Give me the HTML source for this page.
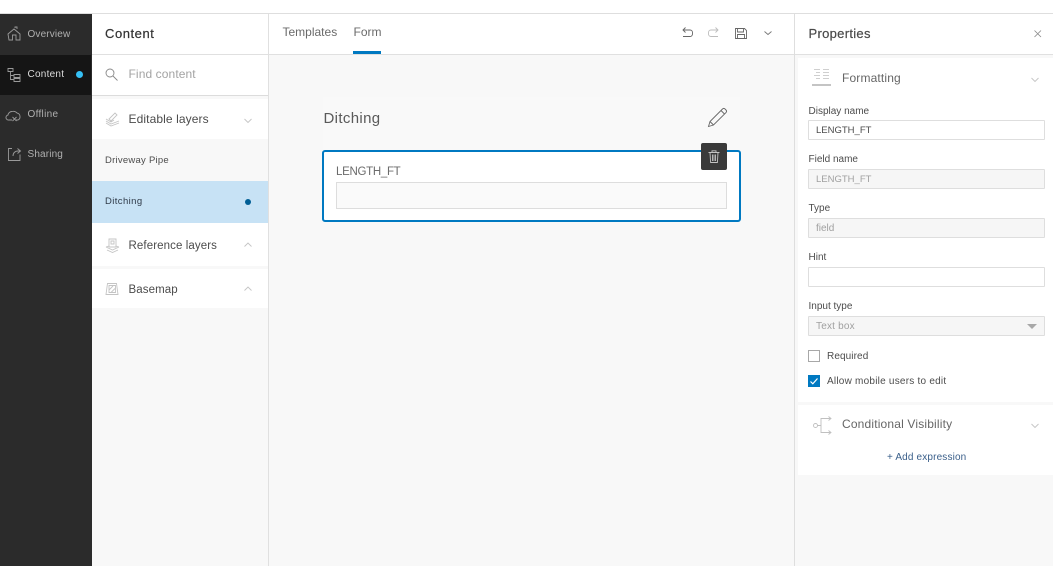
<!DOCTYPE html>
<html><head><meta charset="utf-8">
<style>
html,body{margin:0;padding:0}
body{width:1053px;height:566px;overflow:hidden;position:relative;background:#f8f8f8;font-family:"Liberation Sans",sans-serif;color:#4c4c4c}
.b{position:absolute}
.t{position:absolute;white-space:nowrap;line-height:16px}
svg{position:absolute;overflow:visible;fill:none}
.inp{position:absolute;left:808px;width:235px;height:18px;border:1px solid #dedede;border-radius:1px;background:#fff}
.dis{background:#f6f6f6}
.lab{font-size:10px;color:#4c4c4c;left:808.500px}
.val{font-size:9.500px;left:816px}
</style></head><body>
<div class="b" style="left:0;top:0;width:1053px;height:13px;background:#fff"></div>
<div class="b" style="left:0;top:13px;width:1053px;height:1px;background:#dedede"></div>
<!-- nav -->
<div class="b" style="left:0;top:14px;width:92px;height:552px;background:#2b2b2b"></div>
<div class="b" style="left:0;top:55px;width:91px;height:40px;background:#151515"></div>
<svg style="left:0;top:0" width="92" height="170" stroke="#9a9a9a" stroke-width=".9">
<path d="M8 34l6-5 6 5v6h-4v-5h-3.500v5H9z"/><path d="M15 28v-1h2v2"/>
<path d="M8 68.500h5v3H8zM10.500 71.500v8h3M10.500 75.500h3M14 74.500h6v3h-6zM14 78.500h6v3h-6z"/>
<path d="M12 120h-3a2.500 2.500 0 0 1-1-5 4 4 0 0 1 4-3.500 5 5 0 0 1 5 1.500 3.500 3.500 0 0 1 3 3.500 3.500 3.500 0 0 1-2 3.500h-2M12.500 117l4 4M16.500 117l-4 4"/>
<path d="M12 148.500H8.500v12h11.500v-6M13 156c0-3 2-5 5-5h2M17.500 148.500l3 2.500-3 2.500"/>
</svg>
<div class="t" style="left:27.500px;top:27px;font-size:10px;letter-spacing:.15px;color:#b0b0b0">Overview</div>
<div class="t" style="left:27.500px;top:67px;font-size:10px;letter-spacing:.25px;color:#dcdcdc">Content</div>
<div class="t" style="left:27.500px;top:107px;font-size:10px;letter-spacing:.3px;color:#b0b0b0">Offline</div>
<div class="t" style="left:27.500px;top:147px;font-size:10px;letter-spacing:.15px;color:#b0b0b0">Sharing</div>
<div class="b" style="left:76px;top:71px;width:7px;height:7px;border-radius:50%;background:#35c0f5"></div>
<!-- content panel -->
<div class="b" style="left:92px;top:14px;width:176px;height:552px;background:#f8f8f8"></div>
<div class="b" style="left:268px;top:14px;width:1px;height:552px;background:#e0e0e0"></div>
<div class="b" style="left:92px;top:14px;width:176px;height:40px;background:#fff"></div>
<div class="b" style="left:92px;top:54px;width:177px;height:1px;background:#e0e0e0"></div>
<div class="b" style="left:92px;top:55px;width:176px;height:40px;background:#fff"></div>
<div class="b" style="left:92px;top:95px;width:176px;height:1px;background:#dcdcdc"></div>
<div class="t" style="left:105px;top:26px;font-size:13px;letter-spacing:.55px;color:#323232;-webkit-text-stroke:.2px #323232">Content</div>
<svg style="left:105px;top:68px" width="14" height="14" stroke="#888" stroke-width=".9"><circle cx="5" cy="5" r="4"/><path d="M8 8l4.500 4.500"/></svg>
<div class="t" style="left:128.500px;top:66px;font-size:12px;letter-spacing:.1px;color:#a3a3a3">Find content</div>
<div class="b" style="left:92px;top:99px;width:176px;height:40px;background:#fff"></div>
<svg style="left:105px;top:112px" width="16" height="16" stroke="#c4c4c4" stroke-width=".9"><path d="M1 9l5 3 8-3M1 11l5 3 8-3M1 7l5 3 3-2M4 7l6-6 2 2-6 6z"/></svg>
<div class="t" style="left:128.500px;top:111px;font-size:12px;letter-spacing:.1px;color:#4c4c4c">Editable layers</div>
<svg style="left:244px;top:118px" width="9" height="6" stroke="#c4c4c4" stroke-width=".9"><path d="M0.500 1l3.500 3.500L7.500 1"/></svg>
<div class="t" style="left:105px;top:153px;font-size:9.500px;letter-spacing:.25px;color:#4c4c4c">Driveway Pipe</div>
<div class="b" style="left:92px;top:181px;width:176px;height:42px;background:#c7e2f5"></div>
<div class="t" style="left:105px;top:194px;font-size:9.500px;letter-spacing:.4px;color:#2f3a48">Ditching</div>
<div class="b" style="left:245px;top:199px;width:6px;height:6px;border-radius:50%;background:#005e95"></div>
<div class="b" style="left:92px;top:223px;width:176px;height:43px;background:#fff"></div>
<svg style="left:105px;top:238px" width="16" height="16" stroke="#c4c4c4" stroke-width=".9"><path d="M4 1h7v8H4zM1 9l3-1M14 9l-3-1M1 9l6.500 3L14 9M2 12l5.500 2.500L13 12M6 3h3v3H6z"/></svg>
<div class="t" style="left:128.500px;top:237.500px;font-size:11.500px;letter-spacing:.1px;color:#4c4c4c">Reference layers</div>
<svg style="left:244px;top:242px" width="9" height="6" stroke="#c4c4c4" stroke-width=".9"><path d="M0.500 4.500L4 1l3.500 3.500"/></svg>
<div class="b" style="left:92px;top:269px;width:176px;height:39px;background:#fff"></div>
<svg style="left:105px;top:283px" width="14" height="13" stroke="#c4c4c4" stroke-width=".9"><path d="M2.500 .5h9l1.500 11H1zM4 2.500h6.500v7H4zM4 7l4-4M6 9.500l4-4"/></svg>
<div class="t" style="left:128.500px;top:281.500px;font-size:11.500px;letter-spacing:.1px;color:#4c4c4c">Basemap</div>
<svg style="left:244px;top:286px" width="9" height="6" stroke="#c4c4c4" stroke-width=".9"><path d="M0.500 4.500L4 1l3.500 3.500"/></svg>
<!-- center -->
<div class="b" style="left:269px;top:14px;width:525px;height:40px;background:#fff"></div>
<div class="b" style="left:269px;top:54px;width:526px;height:1px;background:#e0e0e0"></div>
<div class="t" style="left:282.500px;top:24px;font-size:12px;color:#6a6a6a">Templates</div>
<div class="t" style="left:353.500px;top:24px;font-size:12px;color:#6a6a6a">Form</div>
<div class="b" style="left:353px;top:51px;width:28px;height:3px;background:#0079c1"></div>
<svg style="left:680px;top:26px" width="90" height="16" stroke="#666" stroke-width=".9">
<path d="M3 4h7a2.500 2.500 0 0 1 2.500 2.500V8a2.500 2.500 0 0 1-2.500 2.500H3M5.500 1.500L3 4l2.500 2.500"/>
<path stroke="#bdbdbd" d="M38 4h-7A2.500 2.500 0 0 0 28.500 6.500V8A2.500 2.500 0 0 0 31 10.500h7M35.500 1.500L38 4l-2.500 2.500"/>
<path d="M55.500 2.500h9l2 2v8h-11zM57.500 2.500v3.500h6v-3.500M57.500 12.500v-4h7v4"/>
<path stroke="#777" d="M84.500 5.500l3.500 3 3.500-3"/>
</svg>
<!-- form -->
<div class="b" style="left:323px;top:97px;width:417px;height:54px;background:#f9f9f9"></div>
<div class="t" style="left:323.500px;top:111px;font-size:15px;letter-spacing:.35px;color:#5a5a5a">Ditching</div>
<svg style="left:707px;top:107px" width="21" height="21" stroke="#666" stroke-width=".9"><path d="M1.500 19.500l1.500-5L15.500 2a1.800 1.800 0 0 1 2.500 0l1 1a1.800 1.800 0 0 1 0 2.500L6.500 18zM3 14.500l3.500 3.500M14 3.500l3.500 3.500"/></svg>
<div class="b" style="left:322px;top:150px;width:415px;height:68px;border:2px solid #0079c1;border-radius:3px;background:#fff"></div>
<div class="t" style="left:336px;top:164px;font-size:11.500px;letter-spacing:-.3px;color:#6b6b6b">LENGTH_FT</div>
<div class="b" style="left:336px;top:182px;width:389px;height:25px;border:1px solid #ddd;background:#fafafa"></div>
<div class="b" style="left:701px;top:143px;width:26px;height:27px;border-radius:2px;background:#3a3a3a"></div>
<svg style="left:708px;top:150px" width="13" height="14" stroke="#c4c4c4" stroke-width=".9"><path d="M.5 2.500h11M4 2.500V.8h4v1.700M2 2.500l.6 10h6.800l.6-10M4.500 4.500v6.500M6 4.500v6.500M7.500 4.500v6.500"/></svg>
<!-- props -->
<div class="b" style="left:794px;top:14px;width:1px;height:552px;background:#dedede"></div>
<div class="b" style="left:795px;top:14px;width:258px;height:40px;background:#fff"></div>
<div class="b" style="left:795px;top:54px;width:258px;height:1px;background:#e0e0e0"></div>
<div class="t" style="left:808.500px;top:26px;font-size:13px;color:#4a4a4a;letter-spacing:.3px;-webkit-text-stroke:.2px #4a4a4a">Properties</div>
<svg style="left:1034px;top:30px" width="8" height="8" stroke="#888" stroke-width=".8"><path d="M.5.500l6.500 6.500M7 .5L.5 7"/></svg>
<div class="b" style="left:798px;top:58px;width:255px;height:344px;background:#fff"></div>
<svg style="left:812px;top:69px" width="20" height="18" stroke="#cfcfcf" stroke-width=".9"><path d="M2 .5h6M11 .5h6M4 3.500h4M11 3.500h6M2 6.500h6M11 6.500h6M4 9.500h4M11 9.500h6"/><path stroke="#c4c4c4" stroke-width="2" d="M0 16h19"/></svg>
<div class="t" style="left:842px;top:70px;font-size:12px;letter-spacing:.15px;color:#666">Formatting</div>
<svg style="left:1031px;top:77px" width="9" height="6" stroke="#c4c4c4" stroke-width=".9"><path d="M0.500 1l3.500 3.500L7.500 1"/></svg>
<div class="t lab" style="top:104px">Display name</div>
<div class="inp" style="top:120px"></div>
<div class="t val" style="top:123px;color:#4c4c4c">LENGTH_FT</div>
<div class="t lab" style="top:152px">Field name</div>
<div class="inp dis" style="top:169px"></div>
<div class="t val" style="top:172px;color:#a0a0a0">LENGTH_FT</div>
<div class="t lab" style="top:201px">Type</div>
<div class="inp dis" style="top:218px"></div>
<div class="t val" style="top:221px;color:#a0a0a0;font-size:10px">field</div>
<div class="t lab" style="top:250px">Hint</div>
<div class="inp" style="top:267px"></div>
<div class="t lab" style="top:299px">Input type</div>
<div class="inp dis" style="top:316px"></div>
<div class="t val" style="top:319px;color:#a0a0a0;font-size:10px;letter-spacing:.2px">Text box</div>
<div class="b" style="left:1027px;top:324px;width:0;height:0;border-left:5px solid transparent;border-right:5px solid transparent;border-top:5px solid #a8a8a8"></div>
<div class="b" style="left:808px;top:350px;width:10px;height:10px;border:1px solid #a8a8a8"></div>
<div class="t" style="left:827px;top:349px;font-size:10px;letter-spacing:.1px">Required</div>
<div class="b" style="left:808px;top:375px;width:12px;height:12px;background:#0079c1"></div>
<svg style="left:808px;top:375px" width="12" height="12" stroke="#fff" stroke-width="1.200"><path d="M2.500 6.500l2.300 2.300 4.700-5.300"/></svg>
<div class="t" style="left:827px;top:374px;font-size:10px;letter-spacing:.23px">Allow mobile users to edit</div>
<div class="b" style="left:798px;top:405px;width:255px;height:70px;background:#fff"></div>
<svg style="left:813px;top:416px" width="20" height="19" stroke="#c0c0c0" stroke-width=".9"><circle cx="2.500" cy="9.500" r="2"/><path d="M4.500 9.500h3.500M8 9.500V2.500h10M15.500.5l2.500 2-2.500 2M8 9.500v7h10M15.500 14.500l2.500 2-2.500 2"/></svg>
<div class="t" style="left:842px;top:416px;font-size:12px;letter-spacing:.17px;color:#666">Conditional Visibility</div>
<svg style="left:1031px;top:423px" width="9" height="6" stroke="#c4c4c4" stroke-width=".9"><path d="M0.500 1l3.500 3.500L7.500 1"/></svg>
<div class="t" style="left:887px;top:449.500px;font-size:10px;letter-spacing:.15px;color:#3a5f8a">+ Add expression</div>
</body></html>
